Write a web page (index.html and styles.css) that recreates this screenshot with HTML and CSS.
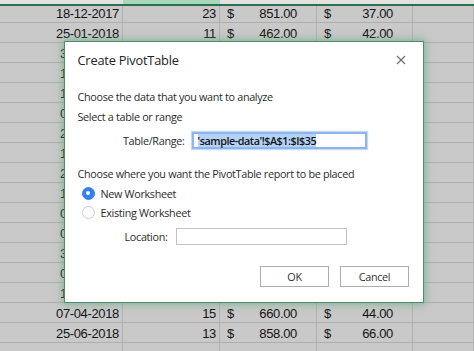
FILE: index.html
```html
<!DOCTYPE html>
<html>
<head>
<meta charset="utf-8">
<link rel="stylesheet" href="styles.css">
</head>
<body>
<div class="sheet">
  <div class="colhead">
    <div class="hc"></div><div class="hc hc-sel"></div><div class="hc"></div><div class="hc"></div><div class="hc"></div>
  </div>
  <div class="row row-first"><div class="c">18-12-2017</div><div class="c">23</div><div class="c m"><span>$</span><span>851.00</span></div><div class="c m"><span>$</span><span>37.00</span></div><div class="c"></div></div>
  <div class="row"><div class="c">25-01-2018</div><div class="c">11</div><div class="c m"><span>$</span><span>462.00</span></div><div class="c m"><span>$</span><span>42.00</span></div><div class="c"></div></div>
  <div class="row"><div class="c peek">3</div><div class="c"></div><div class="c m"></div><div class="c m"></div><div class="c"></div></div>
  <div class="row"><div class="c peek">1</div><div class="c"></div><div class="c m"></div><div class="c m"></div><div class="c"></div></div>
  <div class="row"><div class="c peek">1</div><div class="c"></div><div class="c m"></div><div class="c m"></div><div class="c"></div></div>
  <div class="row"><div class="c peek">0</div><div class="c"></div><div class="c m"></div><div class="c m"></div><div class="c"></div></div>
  <div class="row"><div class="c peek">2</div><div class="c"></div><div class="c m"></div><div class="c m"></div><div class="c"></div></div>
  <div class="row"><div class="c peek">1</div><div class="c"></div><div class="c m"></div><div class="c m"></div><div class="c"></div></div>
  <div class="row"><div class="c peek">2</div><div class="c"></div><div class="c m"></div><div class="c m"></div><div class="c"></div></div>
  <div class="row"><div class="c peek">1</div><div class="c"></div><div class="c m"></div><div class="c m"></div><div class="c"></div></div>
  <div class="row"><div class="c peek">0</div><div class="c"></div><div class="c m"></div><div class="c m"></div><div class="c"></div></div>
  <div class="row"><div class="c peek">0</div><div class="c"></div><div class="c m"></div><div class="c m"></div><div class="c"></div></div>
  <div class="row"><div class="c peek">3</div><div class="c"></div><div class="c m"></div><div class="c m"></div><div class="c"></div></div>
  <div class="row"><div class="c peek">0</div><div class="c"></div><div class="c m"></div><div class="c m"></div><div class="c"></div></div>
  <div class="row"><div class="c peek">1</div><div class="c"></div><div class="c m"></div><div class="c m"></div><div class="c"></div></div>
  <div class="row"><div class="c">07-04-2018</div><div class="c">15</div><div class="c m"><span>$</span><span>660.00</span></div><div class="c m"><span>$</span><span>44.00</span></div><div class="c"></div></div>
  <div class="row"><div class="c">25-06-2018</div><div class="c">13</div><div class="c m"><span>$</span><span>858.00</span></div><div class="c m"><span>$</span><span>66.00</span></div><div class="c"></div></div>
  <div class="row"><div class="c"></div><div class="c"></div><div class="c m"></div><div class="c m"></div><div class="c"></div></div>
</div>

<div class="dialog">
  <div class="titlebar">
    <span class="title">Create PivotTable</span>
    <svg class="close" width="10" height="10" viewBox="0 0 10 10"><path d="M1 1 L9 9 M9 1 L1 9" stroke="#707070" stroke-width="1.2" fill="none"/></svg>
  </div>
  <div class="line l-first">Choose the data that you want to analyze</div>
  <div class="line">Select a table or range</div>
  <div class="field f-range">
    <span class="lbl lbl-range">Table/Range:</span>
    <div class="input input-focus"><span class="sel">'sample-data'!$A$1:$I$35</span></div>
  </div>
  <div class="line l-where">Choose where you want the PivotTable report to be placed</div>
  <div class="radio-row"><span class="radio on"></span><span>New Worksheet</span></div>
  <div class="radio-row"><span class="radio"></span><span>Existing Worksheet</span></div>
  <div class="field f-loc">
    <span class="lbl lbl-loc">Location:</span>
    <div class="input input-loc"></div>
  </div>
  <div class="buttons">
    <div class="btn">OK</div>
    <div class="btn">Cancel</div>
  </div>
</div>
</body>
</html>
```

FILE: styles.css
```css
html, body {
  margin: 0;
  padding: 0;
}
body {
  width: 474px;
  height: 351px;
  overflow: hidden;
  background: #c9c9c9;
  position: relative;
  font-family: "Liberation Sans", Arial, sans-serif;
}
.sheet {
  display: flex;
  flex-direction: column;
}
.colhead {
  display: grid;
  grid-template-columns: 123px 97px 97px 96px 1fr;
  height: 4px;
  border-bottom: 2px solid #2f6e4f;
  background: #e2e2e2;
}
.hc-sel {
  background: #a7d8b9;
}
.row {
  display: grid;
  grid-template-columns: 123px 97px 97px 96px 1fr;
  height: 19px;
  border-bottom: 1px solid #aeaeae;
  font-size: 13px;
  letter-spacing: -0.35px;
  color: #141414;
}
.row-first {
  height: 16px;
}
.c {
  border-right: 1px solid #b2b2b2;
  display: flex;
  align-items: flex-end;
  justify-content: flex-end;
  padding: 0 3px 1px 0;
  line-height: 14px;
  overflow: hidden;
  white-space: nowrap;
}
.c.peek {
  justify-content: flex-start;
  padding-left: 60px;
}
.c.m {
  justify-content: space-between;
  padding: 0 19px 1px 7px;
}

.dialog {
  position: absolute;
  left: 64px;
  top: 41px;
  width: 360px;
  height: 262px;
  box-sizing: border-box;
  background: #fff;
  border: 1.5px solid #4e8d6c;
  box-shadow: 0 0 7px 2px rgba(90, 170, 120, 0.55);
  font-family: "Open Sans", "Noto Sans", sans-serif;
  font-size: 10.8px;
  letter-spacing: -0.32px;
  color: #2b2b2b;
  display: flex;
  flex-direction: column;
  padding-left: 12.5px;
}
.titlebar {
  height: 36px;
  display: flex;
  align-items: center;
  justify-content: space-between;
  padding-right: 17px;
}
.title {
  font-size: 12.8px;
  letter-spacing: -0.2px;
  color: #222;
}
.close {
  display: block;
}
.line {
  line-height: 20px;
  height: 20px;
}
.l-first {
  margin-top: 8.5px;
}
.l-where {
  margin-top: 13px;
}
.field {
  display: flex;
  align-items: center;
  height: 20px;
}
.f-range {
  margin-top: 4px;
}
.f-loc {
  margin-top: 5px;
}
.lbl {
  text-align: right;
}
.lbl-range {
  width: 107px;
  margin-right: 7px;
}
.lbl-loc {
  width: 90px;
  margin-right: 8px;
}
.input {
  height: 17px;
  box-sizing: border-box;
  background: #fff;
  display: flex;
  align-items: center;
}
.input-focus {
  width: 175px;
  border: 2px solid #8fb6ec;
  box-shadow: 0 0 1px 1px #c4dbf8;
  padding-left: 4px;
}
.sel {
  background: #b4d2f6;
  color: #141414;
  line-height: 13px;
  font-weight: 600;
  letter-spacing: -0.45px;
}
.input-loc {
  width: 171px;
  border: 1px solid #c2c2c2;
}
.radio-row {
  display: flex;
  align-items: center;
  height: 19px;
}
.radio {
  width: 13px;
  height: 13px;
  box-sizing: border-box;
  border-radius: 50%;
  border: 1px solid #cdcdcd;
  background: #fff;
  margin: 0 6px 0 4px;
  display: flex;
  align-items: center;
  justify-content: center;
}
.radio.on {
  background: #3480f2;
  border-color: #3480f2;
}
.radio.on::after {
  content: "";
  width: 4px;
  height: 4px;
  border-radius: 50%;
  background: #fff;
}
.buttons {
  display: flex;
  justify-content: flex-end;
  gap: 11px;
  margin-top: 19px;
  padding-right: 14px;
}
.btn {
  width: 69px;
  height: 21px;
  box-sizing: border-box;
  border: 1px solid #acacac;
  background: #fff;
  display: flex;
  align-items: center;
  justify-content: center;
  color: #333;
}
```
